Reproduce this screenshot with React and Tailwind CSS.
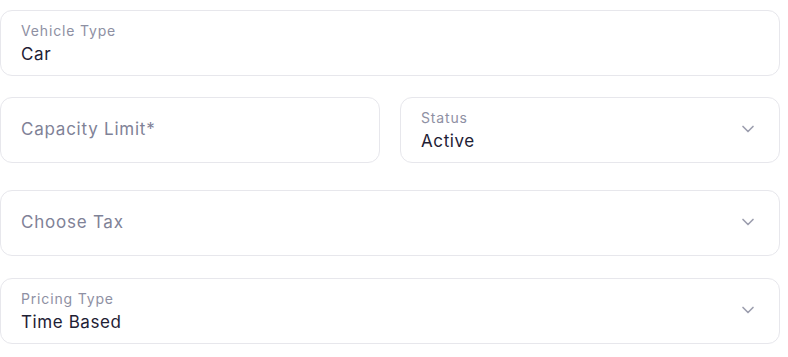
import React from 'react';
import { ChevronDown } from 'lucide-react';

// ── Champs du formulaire ─────────────────────────────────────────────────────
const Field = ({ label, value, placeholder, select, className = '' }) => (
  <div className={`h-[66px] border border-[#e7e7ec] rounded-xl flex items-center justify-between pl-5 pr-[21px] bg-white ${className}`}>
    <div className="flex flex-col">
      {label && <span className="text-[14px] leading-[18px] text-[#8e90a3] tracking-[0.06em]">{label}</span>}
      {value && <span className="text-[17px] leading-[22px] text-[#1e2034] tracking-[0.035em] mt-[3px]">{value}</span>}
      {placeholder && <span className="text-[17px] leading-[22px] text-[#7f8297] tracking-[0.045em] mb-[3px]">{placeholder}</span>}
    </div>
    {select && <ChevronDown size={20} strokeWidth={2} className="text-[#9c9eae] mb-[3px]" />}
  </div>
);

export default function App() {
  return (
    <div className="w-[788px] h-[357px] bg-white" style={{ fontFamily: 'Inter, sans-serif' }}>
      <div className="w-[780px] pt-[10px]">
        <Field label="Vehicle Type" value="Car" />

        <div className="grid grid-cols-2 gap-5 mt-[21px]">
          <Field placeholder="Capacity Limit*" />
          <Field label="Status" value="Active" select />
        </div>

        <Field placeholder="Choose Tax" select className="mt-[27px]" />

        <Field label="Pricing Type" value="Time Based" select className="mt-[22px]" />
      </div>
    </div>
  );
}
